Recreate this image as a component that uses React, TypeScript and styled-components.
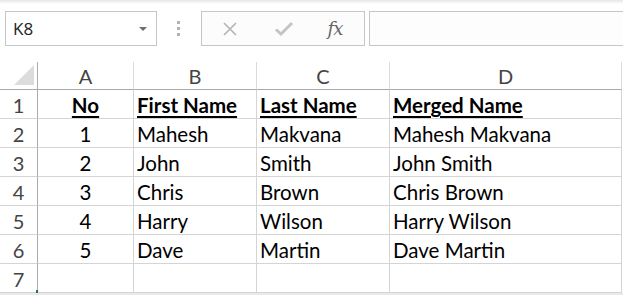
import { Fragment } from "react";
import styled, { createGlobalStyle } from "styled-components";

const GlobalStyle = createGlobalStyle`
  html, body {
    margin: 0;
    padding: 0;
    background: #ffffff;
  }
`;

const Sheet = styled.div`
  width: 623px;
  height: 295px;
  overflow: hidden;
  background: #ffffff;
  font-family: Lato, "Liberation Sans", sans-serif;
`;

const TopStrip = styled.div`
  height: 4px;
  background: linear-gradient(#e6e6e6, #ffffff);
`;

const FormulaBar = styled.div`
  display: flex;
  align-items: center;
  height: 35px;
  margin-top: 7px;
  padding-left: 5px;
`;

const NameBox = styled.div`
  box-sizing: border-box;
  display: flex;
  align-items: center;
  justify-content: space-between;
  width: 152px;
  height: 35px;
  padding: 0 9px 0 7px;
  border: 1px solid #c6c6c6;
  background: #ffffff;
  font-family: "Open Sans", "Noto Sans", sans-serif;
  font-size: 17px;
  color: #222;
`;

const Caret = styled.span`
  width: 0;
  height: 0;
  border-left: 4px solid transparent;
  border-right: 4px solid transparent;
  border-top: 4px solid #6e6e6e;
`;

const Grip = styled.div`
  display: flex;
  flex-direction: column;
  gap: 3px;
  margin: 0 21px 0 20px;
`;

const GripDot = styled.span`
  width: 3px;
  height: 3px;
  background: #b3b3b3;
`;

const ButtonBox = styled.div`
  box-sizing: border-box;
  display: flex;
  align-items: center;
  width: 164px;
  height: 35px;
  border: 1px solid #c6c6c6;
  background: #fcfcfc;
`;

const BarButton = styled.span<{ $w: number }>`
  display: flex;
  align-items: center;
  justify-content: center;
  width: ${(p) => p.$w}px;
  height: 100%;
`;

const Fx = styled.span`
  font-family: "DejaVu Serif", "Liberation Serif", serif;
  font-style: italic;
  font-size: 18px;
  color: #666666;
  letter-spacing: -1px;
`;

const FormulaInput = styled.div`
  box-sizing: border-box;
  flex: 1;
  height: 35px;
  margin-left: 4px;
  margin-right: -4px;
  border: 1px solid #c6c6c6;
  background: #fdfdfd;
`;

const Grid = styled.div`
  display: grid;
  grid-template-columns: 38px 96px 123px 133px 232px;
  grid-template-rows: 28px repeat(7, 29px);
  margin-top: 16px;
  border-bottom: 3px solid #e9e9e9;
`;

const Corner = styled.div`
  position: relative;
  border-right: 1px solid #ababab;
  border-bottom: 1px solid #ababab;
  &::after {
    content: "";
    position: absolute;
    right: 3px;
    bottom: 4px;
    width: 0;
    height: 0;
    border-left: 20px solid transparent;
    border-bottom: 20px solid #dcdcdc;
  }
`;

const ColHead = styled.div`
  display: flex;
  align-items: center;
  justify-content: center;
  border-right: 1px solid #dadada;
  border-bottom: 1px solid #ababab;
  color: #444;
  font-size: 20px;
  line-height: 1;
`;

const RowHead = styled.div<{ $active?: boolean }>`
  position: relative;
  display: flex;
  align-items: center;
  justify-content: center;
  padding-top: 2px;
  border-right: 1px solid #ababab;
  border-bottom: 1px solid #d4d4d4;
  color: #444;
  font-size: 20px;
  line-height: 1;
  &::after {
    content: "";
    display: ${(p) => (p.$active ? "block" : "none")};
    position: absolute;
    right: -1px;
    bottom: -1px;
    width: 2px;
    height: 3px;
    background: #217346;
  }
`;

const Cell = styled.div<{ $center?: boolean; $head?: boolean }>`
  display: flex;
  align-items: center;
  justify-content: ${(p) => (p.$center ? "center" : "flex-start")};
  padding-left: ${(p) => (p.$center ? 0 : 3)}px;
  padding-top: 2px;
  border-right: 1px solid #d4d4d4;
  border-bottom: 1px solid #d4d4d4;
  color: #000;
  font-size: 20.5px;
  line-height: 1;
  font-weight: ${(p) => (p.$head ? 700 : 400)};
  text-decoration: ${(p) => (p.$head ? "underline" : "none")};
  text-decoration-thickness: 2px;
  text-underline-offset: 3px;
  white-space: nowrap;
`;

const rows = [
  ["1", "Mahesh", "Makvana", "Mahesh Makvana"],
  ["2", "John", "Smith", "John Smith"],
  ["3", "Chris", "Brown", "Chris Brown"],
  ["4", "Harry", "Wilson", "Harry Wilson"],
  ["5", "Dave", "Martin", "Dave Martin"],
];

const CrossIcon = () => (
  <svg width="16" height="16" viewBox="0 0 16 16">
    <path d="M2 2 L14 14 M14 2 L2 14" stroke="#b4b4b4" strokeWidth="1.6" fill="none" />
  </svg>
);

const CheckIcon = () => (
  <svg width="20" height="16" viewBox="0 0 20 16">
    <path d="M2 8.5 L7 13 L18 2" stroke="#c4c4c4" strokeWidth="3" fill="none" />
  </svg>
);

export default function App() {
  return (
    <Sheet>
      <GlobalStyle />
      <TopStrip />
      <FormulaBar>
        <NameBox>
          <span>K8</span>
          <Caret />
        </NameBox>
        <Grip>
          <GripDot />
          <GripDot />
          <GripDot />
        </Grip>
        <ButtonBox>
          <BarButton $w={56}>
            <CrossIcon />
          </BarButton>
          <BarButton $w={52}>
            <CheckIcon />
          </BarButton>
          <BarButton $w={50}>
            <Fx>fx</Fx>
          </BarButton>
        </ButtonBox>
        <FormulaInput />
      </FormulaBar>
      <Grid>
        <Corner />
        {["A", "B", "C", "D"].map((c) => (
          <ColHead key={c}>{c}</ColHead>
        ))}
        <RowHead>1</RowHead>
        <Cell $center $head>No</Cell>
        <Cell $head>First Name</Cell>
        <Cell $head>Last Name</Cell>
        <Cell $head>Merged Name</Cell>
        {rows.map((r, i) => (
          <Fragment key={i}>
            <RowHead>{i + 2}</RowHead>
            {r.map((v, j) => (
              <Cell key={j} $center={j === 0}>
                {v}
              </Cell>
            ))}
          </Fragment>
        ))}
        <RowHead $active>7</RowHead>
        <Cell />
        <Cell />
        <Cell />
        <Cell />
      </Grid>
    </Sheet>
  );
}
